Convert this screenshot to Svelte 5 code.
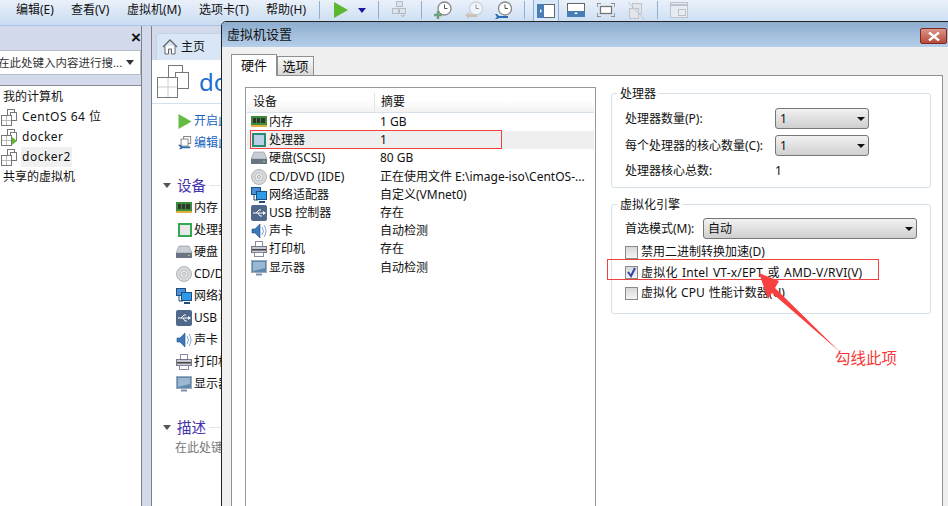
<script>
  const menus = ['编辑(E)', '查看(V)', '虚拟机(M)', '选项卡(T)', '帮助(H)'];

  const sideDevices = [
    { icon: 'mem', label: '内存' },
    { icon: 'cpu', label: '处理器' },
    { icon: 'disk', label: '硬盘 (SCSI)' },
    { icon: 'cd', label: 'CD/DVD (IDE)' },
    { icon: 'net', label: '网络适配器' },
    { icon: 'usb', label: 'USB 控制器' },
    { icon: 'sound', label: '声卡' },
    { icon: 'printer', label: '打印机' },
    { icon: 'monitor', label: '显示器' }
  ];

  const devices = [
    { icon: 'mem', name: '内存', summary: '1 GB' },
    { icon: 'cpu2', name: '处理器', summary: '1', selected: true },
    { icon: 'disk', name: '硬盘(SCSI)', summary: '80 GB' },
    { icon: 'cd', name: 'CD/DVD (IDE)', summary: '正在使用文件 E:\\image-iso\\CentOS-...' },
    { icon: 'net', name: '网络适配器', summary: '自定义(VMnet0)' },
    { icon: 'usb', name: 'USB 控制器', summary: '存在' },
    { icon: 'sound', name: '声卡', summary: '自动检测' },
    { icon: 'printer', name: '打印机', summary: '存在' },
    { icon: 'monitor', name: '显示器', summary: '自动检测' }
  ];

  const checks = [
    { label: '禁用二进制转换加速(D)', on: false },
    { label: '虚拟化 Intel VT-x/EPT 或 AMD-V/RVI(V)', on: true },
    { label: '虚拟化 CPU 性能计数器(U)', on: false }
  ];
</script>

{#snippet vm(play)}
  <svg class="ico" width="17" height="17" viewBox="0 0 17 17" fill="#fff" stroke="#777">
    <rect x="6.500" y=".5" width="7" height="8" />
    <rect x="9.500" y="3.500" width="6" height="8" />
    <rect x=".5" y="6.500" width="10" height="10" />
    <path d="M5.500 7v9M1 11.500h9" stroke="#bbb" />
    {#if play}<path d="M11 8l5 4-5 4z" fill="#5cb82e" stroke="none" />{/if}
  </svg>
{/snippet}

{#snippet device(name)}
  <svg class="ico" width="16" height="16" viewBox="0 0 16 16">
    {#if name === 'mem'}
      <rect x="0" y="2" width="16" height="9" fill="#3d8c3a" />
      <rect x="2" y="4" width="3" height="5" fill="#333" />
      <rect x="6" y="4" width="3" height="5" fill="#333" />
      <rect x="10" y="4" width="4" height="5" fill="#333" />
      <rect x="0" y="11" width="16" height="2" fill="#e0b040" />
    {:else if name === 'cpu'}
      <rect x="3" y="2" width="12" height="12" fill="#e8e8e8" stroke="#35a853" stroke-width="2" />
    {:else if name === 'cpu2'}
      <rect x="2" y="2" width="12" height="12" fill="#b8cfe6" stroke="#2a8a72" stroke-width="2" />
    {:else if name === 'disk'}
      <path d="M3 2h10l3 7H0z" fill="#c9ced6" stroke="#8a8f98" stroke-width=".6" />
      <rect x="0" y="9" width="16" height="5" fill="#6a7484" />
      <rect x="12" y="11" width="2" height="1" fill="#7fdc5c" />
    {:else if name === 'cd'}
      <circle cx="8" cy="8" r="7.500" fill="#d6d8dc" stroke="#b0b3b8" />
      <circle cx="8" cy="8" r="4" fill="#e9eaec" stroke="#c0c2c6" />
      <circle cx="8" cy="8" r="1.500" fill="#fff" stroke="#a8a8a8" />
    {:else if name === 'net'}
      <rect x=".5" y=".5" width="9" height="7" fill="#4a90d8" stroke="#1e4f80" />
      <path d="M3 8v5h4" fill="none" stroke="#1e4f80" />
      <rect x="5.500" y="4.500" width="10" height="8" fill="#2f9be8" stroke="#1e4f80" />
      <path d="M8 15h6" stroke="#1e4f80" stroke-width="2" />
    {:else if name === 'usb'}
      <rect x="0" y="0" width="16" height="16" rx="2" fill="#50698a" />
      <path d="M2 8h11M5 8l3-3h2M7 8l2 3h2" fill="none" stroke="#fff" />
      <path d="M12 6l3 2-3 2z" fill="#fff" />
    {:else if name === 'sound'}
      <path d="M1 6h3l5-5v14l-5-5H1z" fill="#3f78b8" stroke="#1f4f88" stroke-width=".6" />
      <path d="M11 4q3 4 0 8M13 2q4 6 0 12" fill="none" stroke="#7fa8d4" />
    {:else if name === 'printer'}
      <rect x="4.500" y=".5" width="7" height="5" fill="#fff" stroke="#8a8aa0" />
      <rect x=".5" y="5.500" width="15" height="6" fill="#c8c8d4" stroke="#77778a" />
      <rect x="1" y="8" width="14" height="1.500" fill="#444" />
      <rect x="3.500" y="11.500" width="9" height="4" fill="#fff" stroke="#8a8aa0" />
    {:else if name === 'monitor'}
      <rect x=".5" y=".5" width="15" height="12" fill="#5e88ac" stroke="#9aacc0" />
      <path d="M2 2h12v6L2 11z" fill="#9ab8d2" />
      <path d="M5 14.500h6" stroke="#7a90a8" stroke-width="2" />
    {/if}
  </svg>
{/snippet}

{#snippet clock(x, y)}
  <circle cx={x} cy={y} r="6.500" fill="#fff" stroke="currentColor" stroke-width="1.300" />
  <path d="M{x} {y - 4}v4h3" fill="none" stroke="#555" />
{/snippet}

<div class="app">
  <header class="toolbar">
    <nav class="menus">
      {#each menus as m}<span>{m}</span>{/each}
    </nav>
    <i class="sep first"></i>
    <svg class="tb play" width="14" height="16" viewBox="0 0 14 16"><path d="M0 0l14 8L0 16z" fill="#5cb82e" /></svg>
    <svg class="tb drop" width="8" height="5" viewBox="0 0 8 5"><path d="M0 0h8L4 5z" fill="#1a1aa0" /></svg>
    <i class="sep s2"></i>
    <svg class="tb snap" width="14" height="18" viewBox="0 0 14 18" fill="#dde4ee" stroke="#b4bcc8">
      <rect x="4.500" y=".5" width="6" height="5" /><rect x=".5" y="7.500" width="6" height="5" /><rect x="7.500" y="7.500" width="6" height="5" />
      <path d="M11 12v4m-2-2l2 2 2-2" fill="none" />
    </svg>
    <i class="sep s3"></i>
    <svg class="tb c1" width="18" height="18" viewBox="0 0 18 18">
      <g color="#888">{@render clock(10.500, 7.500)}</g>
      <path d="M0 14h8M4 10v8" stroke="#6f9f7f" stroke-width="2.500" />
    </svg>
    <svg class="tb c2" width="20" height="18" viewBox="0 0 20 18" opacity=".55">
      <g color="#b8bec6">{@render clock(12, 7.500)}</g>
      <path d="M1 14l4-3v2h8v3H5v2z" fill="#c8a888" />
    </svg>
    <svg class="tb c3" width="18" height="18" viewBox="0 0 18 18">
      <g color="#888">{@render clock(11, 7.500)}</g>
      <path d="M1 13h2l2 2h9v2H5l-2 1H1l2-2z" fill="#2a6ab0" />
    </svg>
    <i class="sep s4"></i>
    <span class="view-active">
      <svg width="18" height="14" viewBox="0 0 18 14">
        <rect x=".5" y=".5" width="17" height="13" fill="#fff" stroke="#666" />
        <rect x="0" y="0" width="7" height="14" fill="#4a7db5" />
        <path d="M3 5l2 2-2 2z" fill="#fff" />
      </svg>
    </span>
    <svg class="tb v2" width="18" height="14" viewBox="0 0 18 14">
      <rect x=".5" y=".5" width="17" height="13" fill="#fff" stroke="#666" />
      <rect x="0" y="8" width="18" height="6" fill="#4a7db5" />
      <path d="M7 11l2-2 2 2z" fill="#fff" />
    </svg>
    <svg class="tb v3" width="18" height="14" viewBox="0 0 18 14" fill="none" stroke="#777" stroke-width="1.300">
      <rect x="3.500" y="3.500" width="11" height="7" fill="#fff" />
      <path d="M0 4V0h4M14 0h4v4M18 10v4h-4M4 14H0v-4" />
    </svg>
    <svg class="tb v4" width="17" height="18" viewBox="0 0 17 18" fill="#e2e6ec" stroke="#c0c4ca">
      <rect x="4.500" y="1.500" width="9" height="10" /><rect x="1.500" y="6.500" width="9" height="10" />
      <path d="M0 0l17 18" />
    </svg>
    <i class="sep s5"></i>
    <svg class="tb v5" width="18" height="16" viewBox="0 0 18 16" fill="#e8ecf2" stroke="#bcc2ca">
      <rect x=".5" y=".5" width="17" height="15" /><path d="M1 3h16" stroke-width="2" /><rect x="8.500" y="7.500" width="7" height="6" />
    </svg>
  </header>

  <div class="body">
    <aside class="sidebar">
      <div class="close-row">×</div>
      <div class="search">
        <span>在此处键入内容进行搜...</span>
        <i class="caret"></i>
      </div>
      <ul class="tree">
        <li>我的计算机</li>
        <li class="vm">{@render vm(false)}<span>CentOS 64 位</span></li>
        <li class="vm">{@render vm(true)}<span>docker</span></li>
        <li class="vm">{@render vm(false)}<span class="current">docker2</span></li>
        <li>共享的虚拟机</li>
      </ul>
    </aside>

    <main class="main">
      <div class="tabstrip">
        <div class="home-tab">
          <svg width="16" height="16" viewBox="0 0 16 16" fill="#fff" stroke="#666">
            <path d="M1 8l7-7 7 7" fill="none" stroke-width="1.300" /><path d="M3 7v8h3.500v-5h3v5H13V7" />
          </svg>
          <span>主页</span>
          <b>×</b>
        </div>
      </div>
      <div class="vm-head">
        <svg width="32" height="33" viewBox="0 0 32 33" fill="#fff" stroke="#777">
          <rect x="11.500" y=".5" width="14" height="14" />
          <rect x="18.500" y="7.500" width="13" height="16" />
          <rect x=".5" y="12.500" width="20" height="20" />
          <path d="M11 13v19M1 22h19" stroke="#ccc" />
        </svg>
        <span>docker2</span>
      </div>
      <div class="actions">
        <div class="action">
          <svg width="13" height="15" viewBox="0 0 13 15"><path d="M0 0l13 7.500L0 15z" fill="#66bb44" /></svg>
          <span>开启此虚拟机</span>
        </div>
        <div class="action">
          <svg width="16" height="16" viewBox="0 0 16 16" fill="#fff" stroke="#777">
            <rect x="6.500" y=".5" width="8" height="8" /><rect x="3.500" y="3.500" width="8" height="8" />
            <path d="M0 10h3l2 2h9v2H5l-2 1H1l2-2z" fill="#2a6ab0" stroke="none" />
          </svg>
          <span>编辑此虚拟机设置</span>
        </div>
      </div>
      <div class="section">
        <i class="caret"></i><span>设备</span><hr />
      </div>
      <ul class="side-devices">
        {#each sideDevices as d}
          <li>{@render device(d.icon)}<span>{d.label}</span></li>
        {/each}
      </ul>
      <div class="section desc">
        <i class="caret"></i><span>描述</span><hr />
      </div>
      <p class="hint">在此处键入对该虚拟机的描述。</p>
    </main>
  </div>

  <section class="dialog">
    <div class="title">
      <span>虚拟机设置</span>
      <button class="x" aria-label="关闭">
        <svg width="12" height="9" viewBox="0 0 12 9"><path d="M1 .5l10 8M11 .5l-10 8" stroke="#fff" stroke-width="2.400" /></svg>
      </button>
    </div>
    <div class="dlg-body">
      <div class="tabs">
        <span class="tab on">硬件</span>
        <span class="tab">选项</span>
      </div>
      <div class="pane">
        <div class="list">
          <div class="list-head"><span>设备</span><span>摘要</span></div>
          {#each devices as d}
            <div class="row" class:selected={d.selected}>
              <span class="name">{@render device(d.icon)}<em>{d.name}</em></span>
              <span class="summary">{d.summary}</span>
            </div>
          {/each}
        </div>

        <div class="settings">
          <fieldset class="cpu">
            <legend>处理器</legend>
            <div class="field"><span class="lbl">处理器数量(P):</span><div class="select">1<i></i></div></div>
            <div class="field"><span class="lbl">每个处理器的核心数量(C):</span><div class="select">1<i></i></div></div>
            <div class="field total"><span class="lbl">处理器核心总数:</span><span>1</span></div>
          </fieldset>

          <fieldset class="engine">
            <legend>虚拟化引擎</legend>
            <div class="field mode"><span class="lbl">首选模式(M):</span><div class="select">自动<i></i></div></div>
            {#each checks as c}
              <div class="check" class:on={c.on}>
                <span class="box">
                  {#if c.on}
                    <svg width="11" height="11" viewBox="0 0 11 11"><path d="M2 5l3 4 4-8" fill="none" stroke="#3344aa" stroke-width="2" /></svg>
                  {/if}
                </span>
                <span>{c.label}</span>
              </div>
            {/each}
          </fieldset>
        </div>
      </div>
    </div>
  </section>

  <!-- red marks drawn over the screenshot -->
  <div class="mark m1"></div>
  <div class="mark m2"></div>
  <svg class="arrow" width="90" height="90" viewBox="755 268 90 90">
    <path d="M759 273l20 8-4 7 65 64-68-59-4 6z" fill="#f94040" />
  </svg>
  <div class="note">勾线此项</div>
</div>

<style>
  :global(body) {
    margin: 0;
  }

  .app {
    position: relative;
    width: 948px;
    height: 506px;
    overflow: hidden;
    display: flex;
    flex-direction: column;
    background: #d3daec;
    color: #111;
    font: 12px/18px "Noto Sans", "Noto Sans CJK SC", sans-serif;
  }

  ul {
    list-style: none;
    margin: 0;
    padding: 0;
  }

  .ico {
    flex: none;
  }

  /* top bar */
  .toolbar {
    position: relative;
    flex: none;
    height: 26px;
    box-sizing: border-box;
    border-bottom: 1px solid #a9c4e4;
    background: linear-gradient(#eaf1fa, #c9dcf2);
  }

  .menus {
    display: flex;
    padding: 1px 0 0 16px;
    line-height: 18px;
  }

  .menus span:nth-child(1) { width: 55px; }
  .menus span:nth-child(2) { width: 56px; }
  .menus span:nth-child(3) { width: 72px; }
  .menus span:nth-child(4) { width: 67px; }

  .tb,
  .sep,
  .view-active {
    position: absolute;
  }

  .sep {
    top: 1px;
    width: 1px;
    height: 18px;
    background: #8eaed4;
  }

  .first { left: 319px; }
  .s2 { left: 378px; }
  .s3 { left: 421px; }
  .s4 { left: 524px; }
  .s5 { left: 657px; }

  .play { left: 334px; top: 2px; }
  .drop { left: 358px; top: 8px; }
  .snap { left: 392px; top: 1px; }
  .c1 { left: 434px; top: 1px; }
  .c2 { left: 464px; top: 1px; }
  .c3 { left: 494px; top: 1px; }
  .v2 { left: 567px; top: 3px; }
  .v3 { left: 597px; top: 3px; }
  .v4 { left: 628px; top: 2px; }
  .v5 { left: 670px; top: 2px; }

  .view-active {
    left: 533px;
    top: 0;
    width: 24px;
    height: 21px;
    display: flex;
    align-items: center;
    justify-content: center;
    background: #d8e8fa;
    border-left: 1px solid #8eaed4;
    border-right: 1px solid #8eaed4;
  }

  .body {
    flex: 1;
    display: flex;
    min-height: 0;
  }

  /* library */
  .sidebar {
    width: 141px;
    flex: none;
    display: flex;
    flex-direction: column;
    border-right: 1px solid #808080;
  }

  .close-row {
    height: 23px;
    text-align: right;
    font: bold 17px/24px "Liberation Sans", sans-serif;
  }

  .search {
    height: 25px;
    margin: 1px 0 0 -4px;
    box-sizing: border-box;
    display: flex;
    align-items: center;
    justify-content: space-between;
    padding: 0 6px 0 1px;
    border: 1px solid #b8bcc8;
    background: #fff;
    color: #333;
    white-space: nowrap;
    font-size: 11.500px;
  }

  .caret {
    width: 0;
    height: 0;
    border: 4px solid transparent;
    border-top: 5px solid #333;
    border-bottom: 0;
  }

  .tree {
    flex: 1;
    margin-top: 10px;
    padding-top: 1px;
    border-top: 1px solid #8a8a8a;
    background: #fff;
  }

  .tree li {
    height: 20px;
    line-height: 20px;
    padding-left: 3px;
    white-space: nowrap;
  }

  .tree .vm {
    display: flex;
    align-items: center;
    gap: 3px;
    padding-left: 1px;
  }

  .tree .vm span {
    padding: 0 1px;
    letter-spacing: .5px;
  }

  .tree .current {
    background: #f0f0f0;
  }

  /* main area */
  .main {
    width: 400px;
    flex: none;
    margin-left: 9px;
    border-left: 1px solid #808080;
    background: #fff;
    overflow: hidden;
  }

  .tabstrip {
    height: 34px;
    box-sizing: border-box;
    padding: 7px 0 0 4px;
    background: #d3daec;
  }

  .home-tab {
    width: 120px;
    height: 27px;
    box-sizing: border-box;
    display: flex;
    align-items: center;
    gap: 3px;
    padding-left: 5px;
    border: 1px solid #c0d4ea;
    border-bottom: 0;
    border-radius: 4px 0 0 0;
    background: #d8e6f6;
  }

  .home-tab b {
    margin-left: 12px;
    color: #8aa4c0;
  }

  .vm-head {
    height: 44px;
    box-sizing: border-box;
    display: flex;
    align-items: center;
    gap: 10px;
    padding-left: 5px;
    border-bottom: 1px solid #cfe0f0;
    color: #1a6fd0;
    font-size: 24px;
  }

  .actions {
    padding: 6px 0 0 24px;
    color: #1565c0;
  }

  .action {
    height: 22px;
    display: flex;
    align-items: center;
    gap: 2px;
    white-space: nowrap;
  }

  .action svg {
    margin-left: 2px;
    width: 14px;
  }

  .section {
    display: flex;
    align-items: center;
    height: 20px;
    margin-top: 21px;
    padding-left: 11px;
    color: #4433aa;
    font-size: 14.500px;
  }

  .section .caret {
    margin-right: 6px;
    border-top-color: #555;
    border-width: 5px 4px 0;
  }

  .section hr {
    flex: 1;
    margin: 0 0 0 3px;
    border: 0;
    border-top: 1px solid #e4e4e4;
  }

  .section.desc {
    margin-top: 22px;
  }

  .side-devices {
    margin-top: 2px;
    padding-left: 24px;
  }

  .side-devices li {
    height: 22px;
    display: flex;
    align-items: center;
    gap: 2px;
    white-space: nowrap;
  }

  .hint {
    margin: 2px 0 0 23px;
    color: #777;
    white-space: nowrap;
  }

  /* settings dialog, floats over the app */
  .dialog {
    position: absolute;
    left: 221px;
    top: 21px;
    width: 740px;
    height: 500px;
    box-sizing: border-box;
    border: 1px solid #222;
    border-radius: 5px 0 0 0;
    background: #f0f0f0;
    overflow: hidden;
  }

  .title {
    position: relative;
    height: 25px;
    padding-left: 5px;
    background: linear-gradient(#8dacce, #b6cfea);
    font-size: 13px;
    line-height: 25px;
  }

  .x {
    position: absolute;
    left: 698px;
    top: 6px;
    width: 27px;
    height: 16px;
    padding: 0;
    display: flex;
    align-items: center;
    justify-content: center;
    border: 1px solid #7a2a20;
    border-radius: 2px;
    background: linear-gradient(#dc9488, #b84a3a);
  }

  .dlg-body {
    padding: 6px 0 0 9px;
  }

  .tabs {
    display: flex;
    align-items: flex-end;
    height: 22px;
  }

  .tab {
    width: 37px;
    height: 19px;
    box-sizing: border-box;
    border: 1px solid #909090;
    border-bottom: 0;
    background: linear-gradient(#fafafa, #d8d8d8);
    text-align: center;
    font-size: 13px;
    line-height: 19px;
  }

  .tab.on {
    position: relative;
    top: 1px;
    width: 46px;
    height: 22px;
    background: #fff;
    line-height: 21px;
  }

  .pane {
    width: 712px;
    height: 440px;
    box-sizing: border-box;
    display: flex;
    gap: 15px;
    padding: 11px 0 0 13px;
    border: 1px solid #909090;
    background: #fff;
  }

  .list {
    width: 351px;
    flex: none;
    box-sizing: border-box;
    padding: 4px 1px 0;
    border: 1px solid #999;
    border-bottom: 0;
  }

  .list-head {
    display: flex;
    height: 20px;
    padding-left: 6px;
    align-items: center;
    border-bottom: 1px solid #d8e0ea;
    background: linear-gradient(#fff 40%, #f2f2f2);
  }

  .list-head span:first-child {
    width: 121px;
    border-right: 1px solid #e4e4e4;
    margin-right: 6px;
  }

  .row {
    display: flex;
    height: 18.200px;
    padding-left: 4px;
    align-items: center;
    white-space: nowrap;
  }

  .row.selected {
    background: #efefef;
  }

  .name {
    width: 129px;
    display: flex;
    align-items: center;
    gap: 2px;
  }

  .name em {
    font-style: normal;
  }

  .settings {
    width: 320px;
    flex: none;
  }

  fieldset {
    margin: 0;
    padding: 0 13px;
    min-width: 0;
    box-sizing: border-box;
    border: 1px solid #d6e0e8;
    border-radius: 3px;
  }

  legend {
    margin-left: -8px;
    padding: 0 3px;
    line-height: 17px;
  }

  .cpu {
    height: 103px;
    margin-top: -2px;
  }

  .engine {
    height: 118px;
    margin-top: 8px;
  }

  .field {
    display: flex;
    align-items: center;
    height: 27px;
  }

  .lbl {
    width: 150px;
    flex: none;
    white-space: nowrap;
  }

  .cpu .field:first-of-type {
    margin-top: 3px;
  }

  .total {
    height: 23px;
  }

  .select {
    position: relative;
    width: 94px;
    height: 21px;
    box-sizing: border-box;
    padding-left: 4px;
    border: 1px solid #777;
    border-radius: 3px;
    background: linear-gradient(#f2f2f2, #cfcfcf);
    line-height: 20px;
  }

  .select i {
    position: absolute;
    right: 3px;
    top: 8px;
    border: 4px solid transparent;
    border-top: 4px solid #111;
    border-bottom: 0;
  }

  .mode {
    margin-top: 2px;
  }

  .mode .lbl {
    width: 78px;
  }

  .mode .select {
    width: 215px;
  }

  .check {
    display: flex;
    align-items: center;
    gap: 3px;
    height: 20.500px;
    white-space: nowrap;
    word-spacing: 1px;
  }

  .check.on {
    letter-spacing: .2px;
  }

  .box {
    width: 13px;
    height: 13px;
    box-sizing: border-box;
    display: flex;
    align-items: center;
    justify-content: center;
    border: 1px solid #8a8a8a;
    background: linear-gradient(#d8d8d8, #f4f4f4);
  }

  /* annotations */
  .mark {
    position: absolute;
    box-sizing: border-box;
    border: 1px solid #f04040;
  }

  .m1 {
    left: 250px;
    top: 130px;
    width: 252px;
    height: 19px;
  }

  .m2 {
    left: 607px;
    top: 259px;
    width: 272px;
    height: 21px;
  }

  .arrow {
    position: absolute;
    left: 755px;
    top: 268px;
  }

  .note {
    position: absolute;
    left: 835px;
    top: 349px;
    color: #f63a3a;
    font-size: 15.500px;
  }
</style>
